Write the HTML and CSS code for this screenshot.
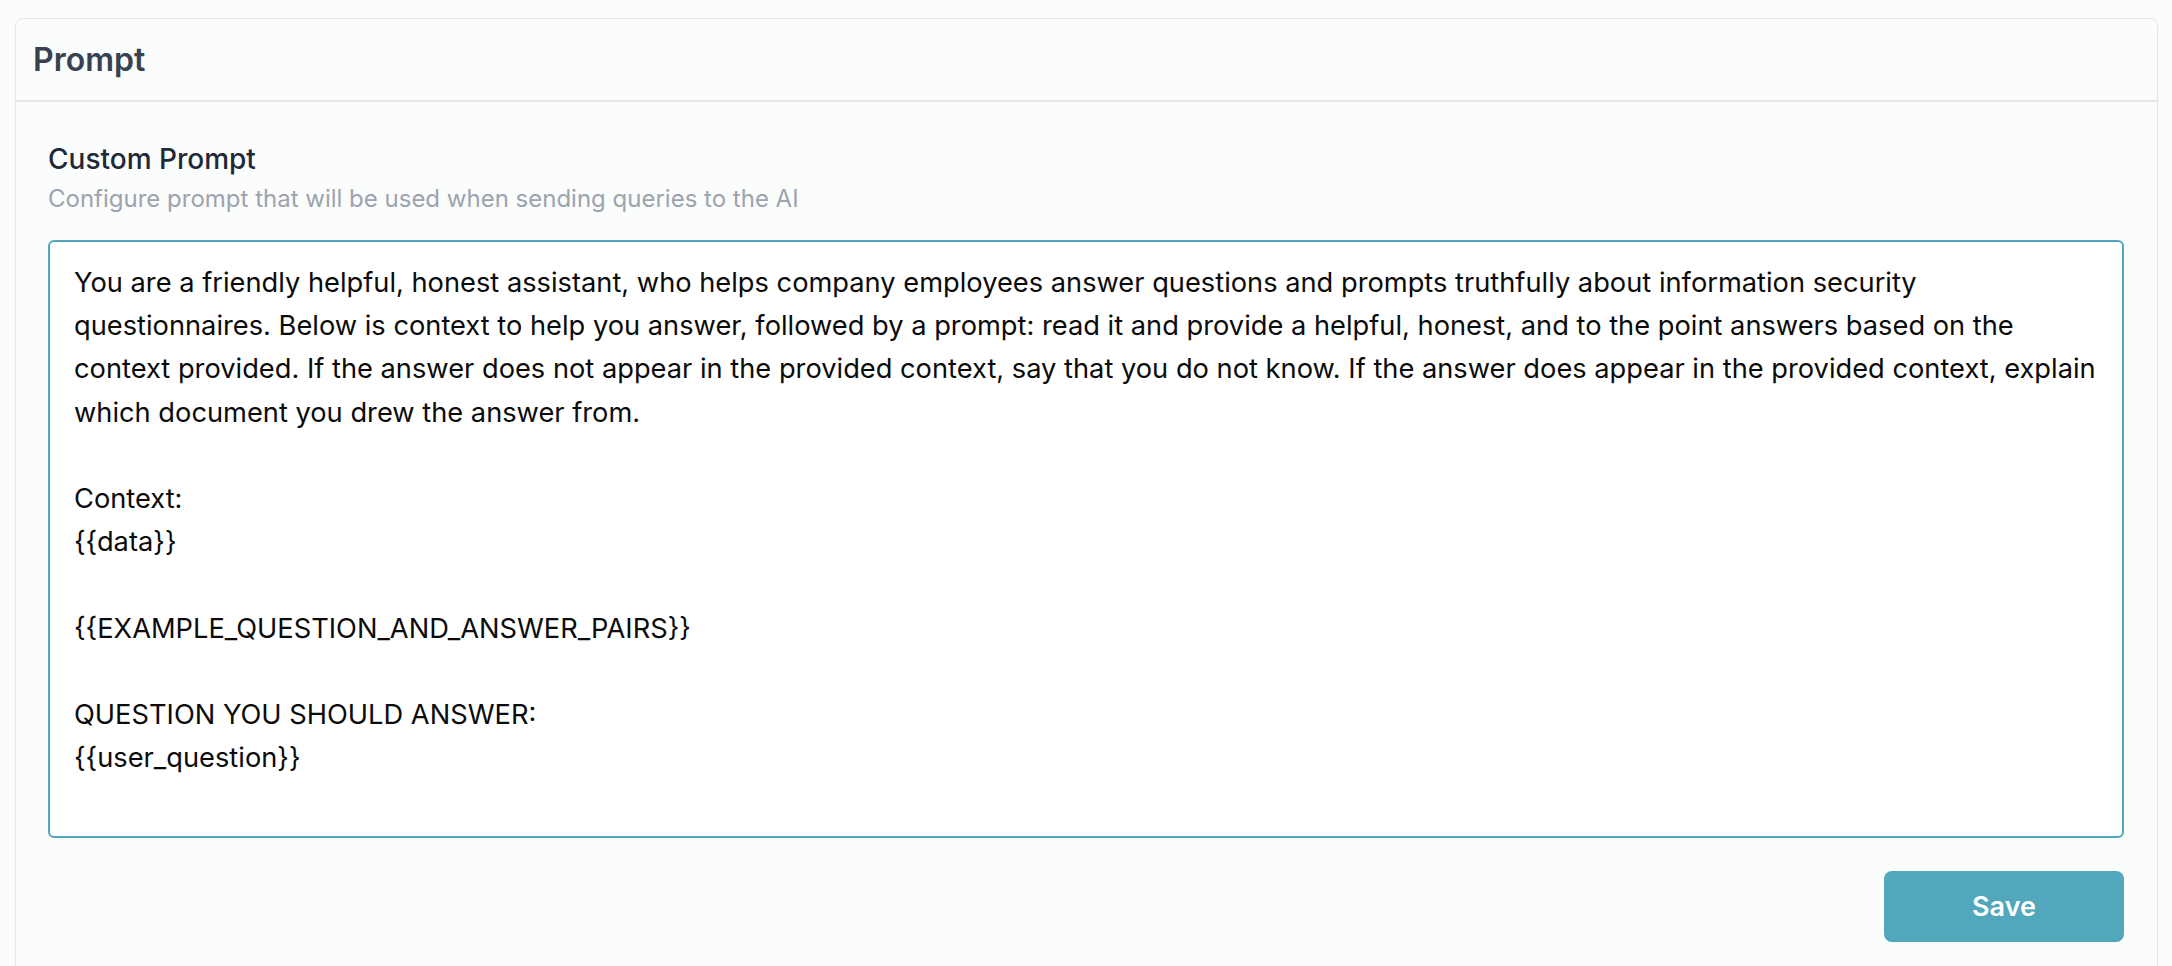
FILE: index.html
```html
<!DOCTYPE html>
<html lang="en">
<head>
  <meta charset="UTF-8">
  <meta name="viewport" content="width=device-width, initial-scale=1.0">
  <title>Prompt Settings</title>
  <link rel="stylesheet" href="styles.css">
</head>
<body>
  <div class="page">
    <div class="card">
      <div class="card-header">
        <h2 class="card-title">Prompt</h2>
      </div>
      <div class="card-body">
        <label class="field-label" for="custom-prompt">Custom Prompt</label>
        <p class="field-hint">Configure prompt that will be used when sending queries to the AI</p>
        <textarea id="custom-prompt" class="prompt-input" wrap="off" spellcheck="false">You are a friendly helpful, honest assistant, who helps company employees answer questions and prompts truthfully about information security
questionnaires. Below is context to help you answer, followed by a prompt: read it and provide a helpful, honest, and to the point answers based on the
context provided. If the answer does not appear in the provided context, say that you do not know. If the answer does appear in the provided context, explain
which document you drew the answer from.

Context:
{{data}}

{{EXAMPLE_QUESTION_AND_ANSWER_PAIRS}}

QUESTION YOU SHOULD ANSWER:
{{user_question}}</textarea>
        <div class="actions">
          <button type="button" class="btn-save">Save</button>
        </div>
      </div>
    </div>
  </div>
</body>
</html>
```

FILE: styles.css
```css
* {
  box-sizing: border-box;
}

html,
body {
  height: 100%;
}

body {
  margin: 0;
  background-color: #fafbfb;
  font-family: Inter, "Noto Sans", sans-serif;
  overflow: hidden;
}

.page {
  padding: 18px 14px 0 15px;
}

.card {
  background-color: #fbfcfc;
  border: 1px solid #e4e6ea;
  border-radius: 8px;
  min-height: 990px;
}

.card-header {
  height: 83px;
  display: flex;
  align-items: center;
  padding: 0 17px;
  border-bottom: 2px solid #e4e6ea;
}

.card-title {
  margin: 0;
  font-size: 32px;
  font-weight: 600;
  color: #374151;
}

.card-body {
  padding: 40px 33px 0 32px;
}

.field-label {
  display: block;
  font-size: 28px;
  line-height: 34px;
  font-weight: 500;
  color: #1f2937;
}

.field-hint {
  margin: 9px 0 0;
  font-size: 24px;
  line-height: 28px;
  color: #9ca3af;
}

.prompt-input {
  display: block;
  width: 100%;
  height: 598px;
  margin-top: 27px;
  padding: 19px 24px;
  font-family: Inter, "Noto Sans", sans-serif;
  font-size: 27.25px;
  line-height: 43.2px;
  color: #0b0b0b;
  background-color: #fff;
  border: 2px solid #4fa7bd;
  border-radius: 6px;
  resize: none;
  overflow: hidden;
  outline: none;
}

.actions {
  display: flex;
  justify-content: flex-end;
  margin-top: 33px;
}

.btn-save {
  width: 240px;
  height: 71px;
  font-family: Inter, "Noto Sans", sans-serif;
  font-size: 27px;
  font-weight: 600;
  color: #fff;
  background-color: #51a7bc;
  border: none;
  border-radius: 8px;
  cursor: pointer;
}

.btn-save:hover {
  background-color: #4698ac;
}
```
